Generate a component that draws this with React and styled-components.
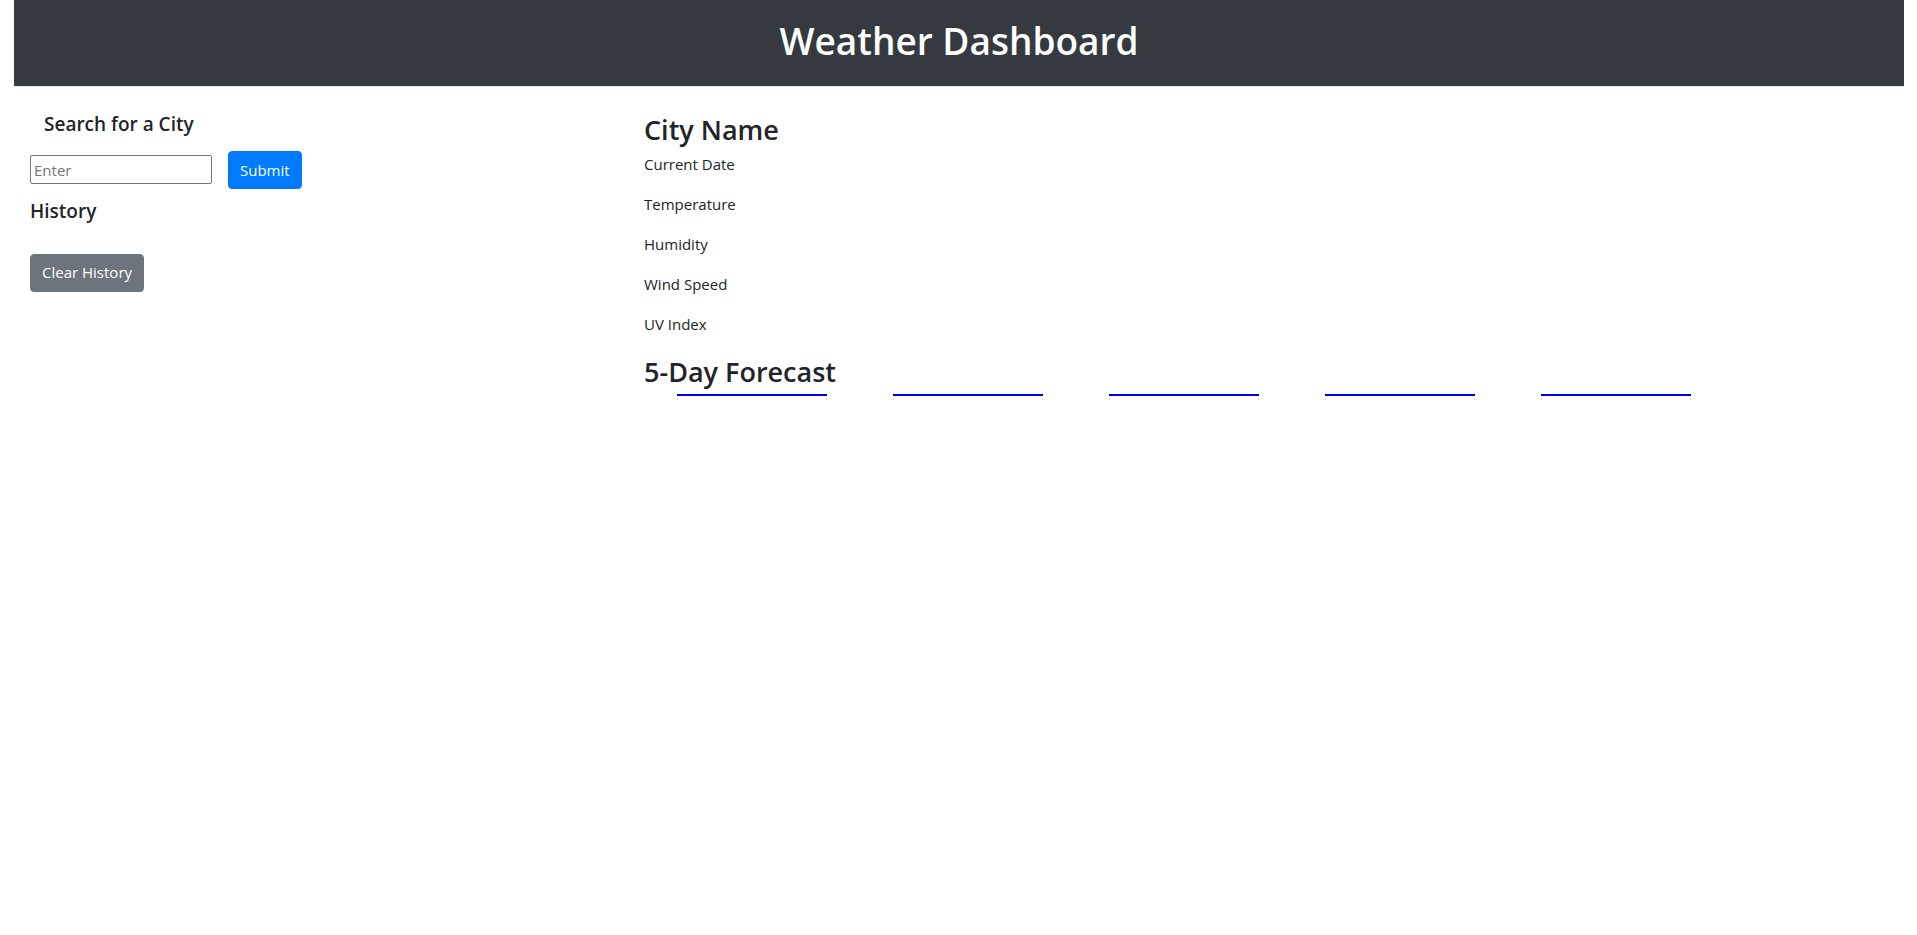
import React from "react";
import styled, { createGlobalStyle } from "styled-components";

const Global = createGlobalStyle`
  html, body { margin: 0; padding: 0; background: #fff; }
  body {
    font-family: "Open Sans", "Noto Sans", "Liberation Sans", sans-serif;
    color: #212529;
    font-size: 15px;
  }
  * { box-sizing: border-box; }
`;

const Header = styled.header`
  margin: 0 13px 0 14px;
  height: 87px;
  padding-bottom: 4px;
  background: #343a40;
  border-bottom: 1px solid #e9ecef;
  display: flex;
  align-items: center;
  justify-content: center;
`;

const Title = styled.h1`
  margin: 0;
  font-size: 37px;
  font-weight: 600;
  line-height: 1.2;
  color: #fff;
`;

const Main = styled.main`
  display: grid;
  grid-template-columns: 630px 1fr;
  margin-left: 14px;
`;

const Sidebar = styled.section`
  padding: 26px 0 0 16px;
  display: flex;
  flex-direction: column;
  align-items: flex-start;
`;

const SubHeading = styled.h5`
  margin: ${(p) => p.$margin || "0"};
  font-size: 19px;
  font-weight: 600;
  line-height: 1.2;
`;

const SearchRow = styled.form`
  display: flex;
  align-items: center;
  gap: 16px;
  margin: 15px 0 11px;
`;

const Input = styled.input`
  width: 182px;
  height: 29px;
  border: 1px solid #767676;
  border-radius: 2px;
  padding: 1px 3px;
  font-family: inherit;
  font-size: 15px;
  color: #212529;
  &::placeholder { color: #757575; }
`;

const Button = styled.button`
  height: 38px;
  margin-top: ${(p) => p.$top || "0"};
  padding: 0 11px;
  border: 1px solid ${(p) => p.$bg};
  border-radius: 4px;
  background: ${(p) => p.$bg};
  color: #fff;
  font-family: inherit;
  font-size: 15px;
  line-height: 1.5;
  cursor: pointer;
`;

const Content = styled.section`
  padding-top: 27px;
`;

const CityHeading = styled.h3`
  margin: ${(p) => p.$margin || "0"};
  font-size: 27px;
  font-weight: 600;
  line-height: 1.2;
`;

const Stat = styled.p`
  margin: 0 0 16px;
  font-size: 15px;
  line-height: 24px;
`;

const ForecastRow = styled.div`
  display: flex;
  gap: 66px;
  padding-left: 33px;
  margin-top: 5px;
`;

const ForecastCard = styled.a`
  display: block;
  width: 150px;
  height: 2px;
  background: #0000ee;
`;

export default function App() {
  const stats = ["Current Date", "Temperature", "Humidity", "Wind Speed", "UV Index"];
  return (
    <>
      <Global />
      <Header>
        <Title>Weather Dashboard</Title>
      </Header>
      <Main>
        <Sidebar>
          <SubHeading $margin="0 0 0 14px">Search for a City</SubHeading>
          <SearchRow onSubmit={(e) => e.preventDefault()}>
            <Input placeholder="Enter" />
            <Button $bg="#007bff" type="submit">Submit</Button>
          </SearchRow>
          <SubHeading>History</SubHeading>
          <Button $bg="#6c757d" $top="31px" type="button">Clear History</Button>
        </Sidebar>
        <Content>
          <CityHeading $margin="0 0 6px">City Name</CityHeading>
          {stats.map((s) => (
            <Stat key={s}>{s}</Stat>
          ))}
          <CityHeading $margin="20px 0 0">5-Day Forecast</CityHeading>
          <ForecastRow>
            {[0, 1, 2, 3, 4].map((i) => (
              <ForecastCard key={i} href="#" aria-label={`Day ${i + 1}`} />
            ))}
          </ForecastRow>
        </Content>
      </Main>
    </>
  );
}
